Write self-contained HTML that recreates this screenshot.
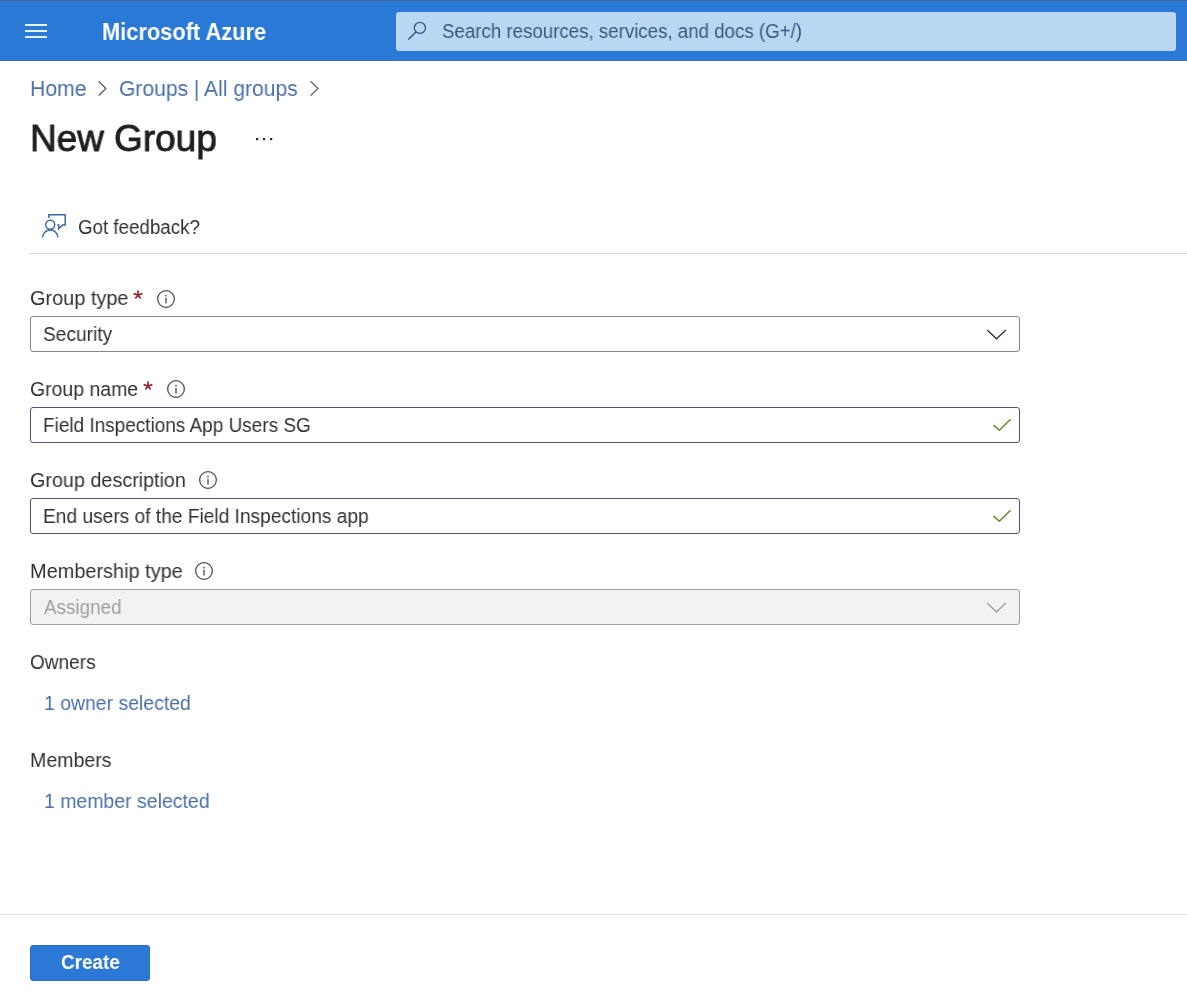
<!DOCTYPE html>
<html><head><meta charset="utf-8">
<style>
*{margin:0;padding:0;box-sizing:border-box}
html,body{width:1187px;height:1007px;overflow:hidden;background:#fff;font-family:"Liberation Sans",sans-serif;color:#323130}
.t{position:absolute;white-space:nowrap;transform-origin:0 0;font-size:20px;line-height:24px;will-change:transform}
#hdr{position:absolute;left:0;top:0;width:1187px;height:61px;background:#2a79d6;border-top:1px solid #41699e;border-bottom:1px solid #3d6aa3}
.hb{position:absolute;left:25px;width:22px;height:2px;background:#e4f4ff}
#search{position:absolute;left:396px;top:12px;width:780px;height:39px;background:#b9d7f2;border-radius:3px}
.box{position:absolute;left:30px;width:990px;height:36px;border:1px solid #8a8886;border-radius:3px;background:#fff}
.boxp{border-color:#5f4b78}
.bc{color:#4a6fab;font-size:22px;line-height:26px}
.lnk{color:#4a6fab}
</style></head>
<body>
<div id="hdr">
  <div class="hb" style="top:23px"></div>
  <div class="hb" style="top:29px"></div>
  <div class="hb" style="top:35px"></div>
</div>
<div class="t" id="brand" style="left:102.11px;top:19px;font-size:23.2px;line-height:26px;font-weight:bold;color:#fff;transform:scaleX(0.9410)">Microsoft Azure</div>
<div id="search"></div>
<svg style="position:absolute;left:404px;top:19px" width="26" height="24" viewBox="0 0 26 24"><circle cx="15.9" cy="8.9" r="5.55" fill="none" stroke="#2f5580" stroke-width="1.3"/><path d="M11.9 12.9 L4.3 20.5" stroke="#2f5580" stroke-width="1.45" fill="none"/></svg>
<div class="t" id="stext" style="left:442.07px;top:19px;color:#385a82;transform:scaleX(0.9346)">Search resources, services, and docs (G+/)</div>

<div class="t bc" id="home" style="left:30.07px;top:76px;transform:scaleX(0.9637)">Home</div>
<svg style="position:absolute;left:96px;top:79px" width="12" height="19" viewBox="0 0 12 19"><path d="M2.8 2.2 L9.8 9.5 L2.8 16.5" fill="none" stroke="#605e5c" stroke-width="1.3"/></svg>
<div class="t bc" id="groups" style="left:118.55px;top:76px;transform:scaleX(0.9570)">Groups | All groups</div>
<svg style="position:absolute;left:308px;top:79px" width="12" height="19" viewBox="0 0 12 19"><path d="M2.5 2.3 L10 9.4 L2.5 16.6" fill="none" stroke="#605e5c" stroke-width="1.3"/></svg>

<div class="t" id="title" style="left:30.07px;top:116px;font-size:37.8px;line-height:44px;color:#201f1e;-webkit-text-stroke:0.9px #201f1e;transform:scaleX(0.9772)">New Group</div>
<svg style="position:absolute;left:250px;top:132px" width="28" height="14" viewBox="0 0 28 14"><rect x="6" y="6" width="2.2" height="2.2" fill="#2a2a2a"/><rect x="13" y="6" width="2.2" height="2.2" fill="#2a2a2a"/><rect x="20" y="6" width="2.2" height="2.2" fill="#2a2a2a"/></svg>

<svg style="position:absolute;left:38px;top:210px" width="32" height="32" viewBox="0 0 32 32" fill="none" stroke="#3867a8" stroke-width="1.45"><path d="M10.8 8 V4.8 H27.2 V14.9 H24.4 L20.7 18.8 V14.9 H19.2"/><circle cx="12.2" cy="14.8" r="4.5"/><path d="M4.5 27.6 A7.7 7.7 0 0 1 19.9 27.6"/></svg>
<div class="t" id="fb" style="left:78.06px;top:215px;transform:scaleX(0.9371)">Got feedback?</div>
<div style="position:absolute;left:30px;top:253px;width:1157px;height:1px;background:#d6d6d6"></div>

<div class="t" id="l1" style="left:30.01px;top:286px;transform:scaleX(0.9948)">Group type</div>
<svg style="position:absolute;left:131.8px;top:288.6px" width="12" height="12" viewBox="-6 -6 12 12"><path d="M0 0V-4.4M0 0L4.4 -1.4M0 0L2.65 3.6M0 0L-2.65 3.6M0 0L-4.4 -1.4" stroke="#942633" stroke-width="1.7" fill="none"/></svg><svg style="position:absolute;left:156.0px;top:288.8px" width="20" height="20" viewBox="-10 -10 20 20"><circle cx="0" cy="0" r="8.35" fill="none" stroke="#4a4a4a" stroke-width="1.25"/><rect x="-0.9" y="-4.2" width="1.8" height="1.7" fill="#777"/><rect x="-0.9" y="-1.2" width="1.8" height="5.6" fill="#777"/></svg>
<div class="box" style="top:316px"></div>
<div class="t" id="v1" style="left:43.04px;top:322px;transform:scaleX(0.9572)">Security</div>
<svg style="position:absolute;left:980px;top:316px" width="36" height="36" viewBox="0 0 36 36"><path d="M7.2 14 L16.5 22.8 L25.9 14" fill="none" stroke="#323130" stroke-width="1.35"/></svg>

<div class="t" id="l2" style="left:30.03px;top:377px;transform:scaleX(0.9722)">Group name</div>
<svg style="position:absolute;left:141.8px;top:379.5px" width="12" height="12" viewBox="-6 -6 12 12"><path d="M0 0V-4.4M0 0L4.4 -1.4M0 0L2.65 3.6M0 0L-2.65 3.6M0 0L-4.4 -1.4" stroke="#942633" stroke-width="1.7" fill="none"/></svg><svg style="position:absolute;left:166.0px;top:378.9px" width="20" height="20" viewBox="-10 -10 20 20"><circle cx="0" cy="0" r="8.35" fill="none" stroke="#4a4a4a" stroke-width="1.25"/><rect x="-0.9" y="-4.2" width="1.8" height="1.7" fill="#777"/><rect x="-0.9" y="-1.2" width="1.8" height="5.6" fill="#777"/></svg>
<div class="box boxp" style="top:407px"></div>
<div class="t" id="v2" style="left:43.09px;top:413px;transform:scaleX(0.9483)">Field Inspections App Users SG</div>
<svg style="position:absolute;left:980px;top:407px" width="36" height="36" viewBox="0 0 36 36"><path d="M13.5 18.2 L19.4 23.3 L30.5 12.3" fill="none" stroke="#5e9132" stroke-width="1.55"/></svg>

<div class="t" id="l3" style="left:30.02px;top:468px;transform:scaleX(0.9875)">Group description</div>
<svg style="position:absolute;left:198.0px;top:469.8px" width="20" height="20" viewBox="-10 -10 20 20"><circle cx="0" cy="0" r="8.35" fill="none" stroke="#4a4a4a" stroke-width="1.25"/><rect x="-0.9" y="-4.2" width="1.8" height="1.7" fill="#777"/><rect x="-0.9" y="-1.2" width="1.8" height="5.6" fill="#777"/></svg>
<div class="box boxp" style="top:498px"></div>
<div class="t" id="v3" style="left:43.00px;top:504px;transform:scaleX(0.9574)">End users of the Field Inspections app</div>
<svg style="position:absolute;left:980px;top:498px" width="36" height="36" viewBox="0 0 36 36"><path d="M13.5 18.2 L19.4 23.3 L30.5 12.3" fill="none" stroke="#5e9132" stroke-width="1.55"/></svg>

<div class="t" id="l4" style="left:30.02px;top:559px;transform:scaleX(0.9959)">Membership type</div>
<svg style="position:absolute;left:194.0px;top:560.9px" width="20" height="20" viewBox="-10 -10 20 20"><circle cx="0" cy="0" r="8.35" fill="none" stroke="#4a4a4a" stroke-width="1.25"/><rect x="-0.9" y="-4.2" width="1.8" height="1.7" fill="#777"/><rect x="-0.9" y="-1.2" width="1.8" height="5.6" fill="#777"/></svg>
<div class="box" style="top:589px;background:#f3f2f1;border-color:#a19f9d"></div>
<div class="t" id="v4" style="left:44.00px;top:595px;color:#a19f9d;transform:scaleX(0.9426)">Assigned</div>
<svg style="position:absolute;left:980px;top:589px" width="36" height="36" viewBox="0 0 36 36"><path d="M7.2 14 L16.5 23 L25.9 14" fill="none" stroke="#a19f9d" stroke-width="1.35"/></svg>

<div class="t" id="l5" style="left:30.04px;top:650px;transform:scaleX(0.9518)">Owners</div>
<div class="t lnk" id="k1" style="left:43.57px;top:691px;transform:scaleX(0.9709)">1 owner selected</div>
<div class="t" id="l6" style="left:30.03px;top:748px;transform:scaleX(0.9786)">Members</div>
<div class="t lnk" id="k2" style="left:43.54px;top:789px;transform:scaleX(0.9735)">1 member selected</div>

<div style="position:absolute;left:0;top:914px;width:1187px;height:1px;background:#e1dfdd"></div>
<div style="position:absolute;left:30px;top:945px;width:120px;height:36px;background:#2b78d6;border:1px solid #2f6cba;border-radius:3px"></div>
<div class="t" id="cr" style="left:61.05px;top:950px;font-weight:bold;color:#fff;transform:scaleX(0.9435)">Create</div>
</body></html>
